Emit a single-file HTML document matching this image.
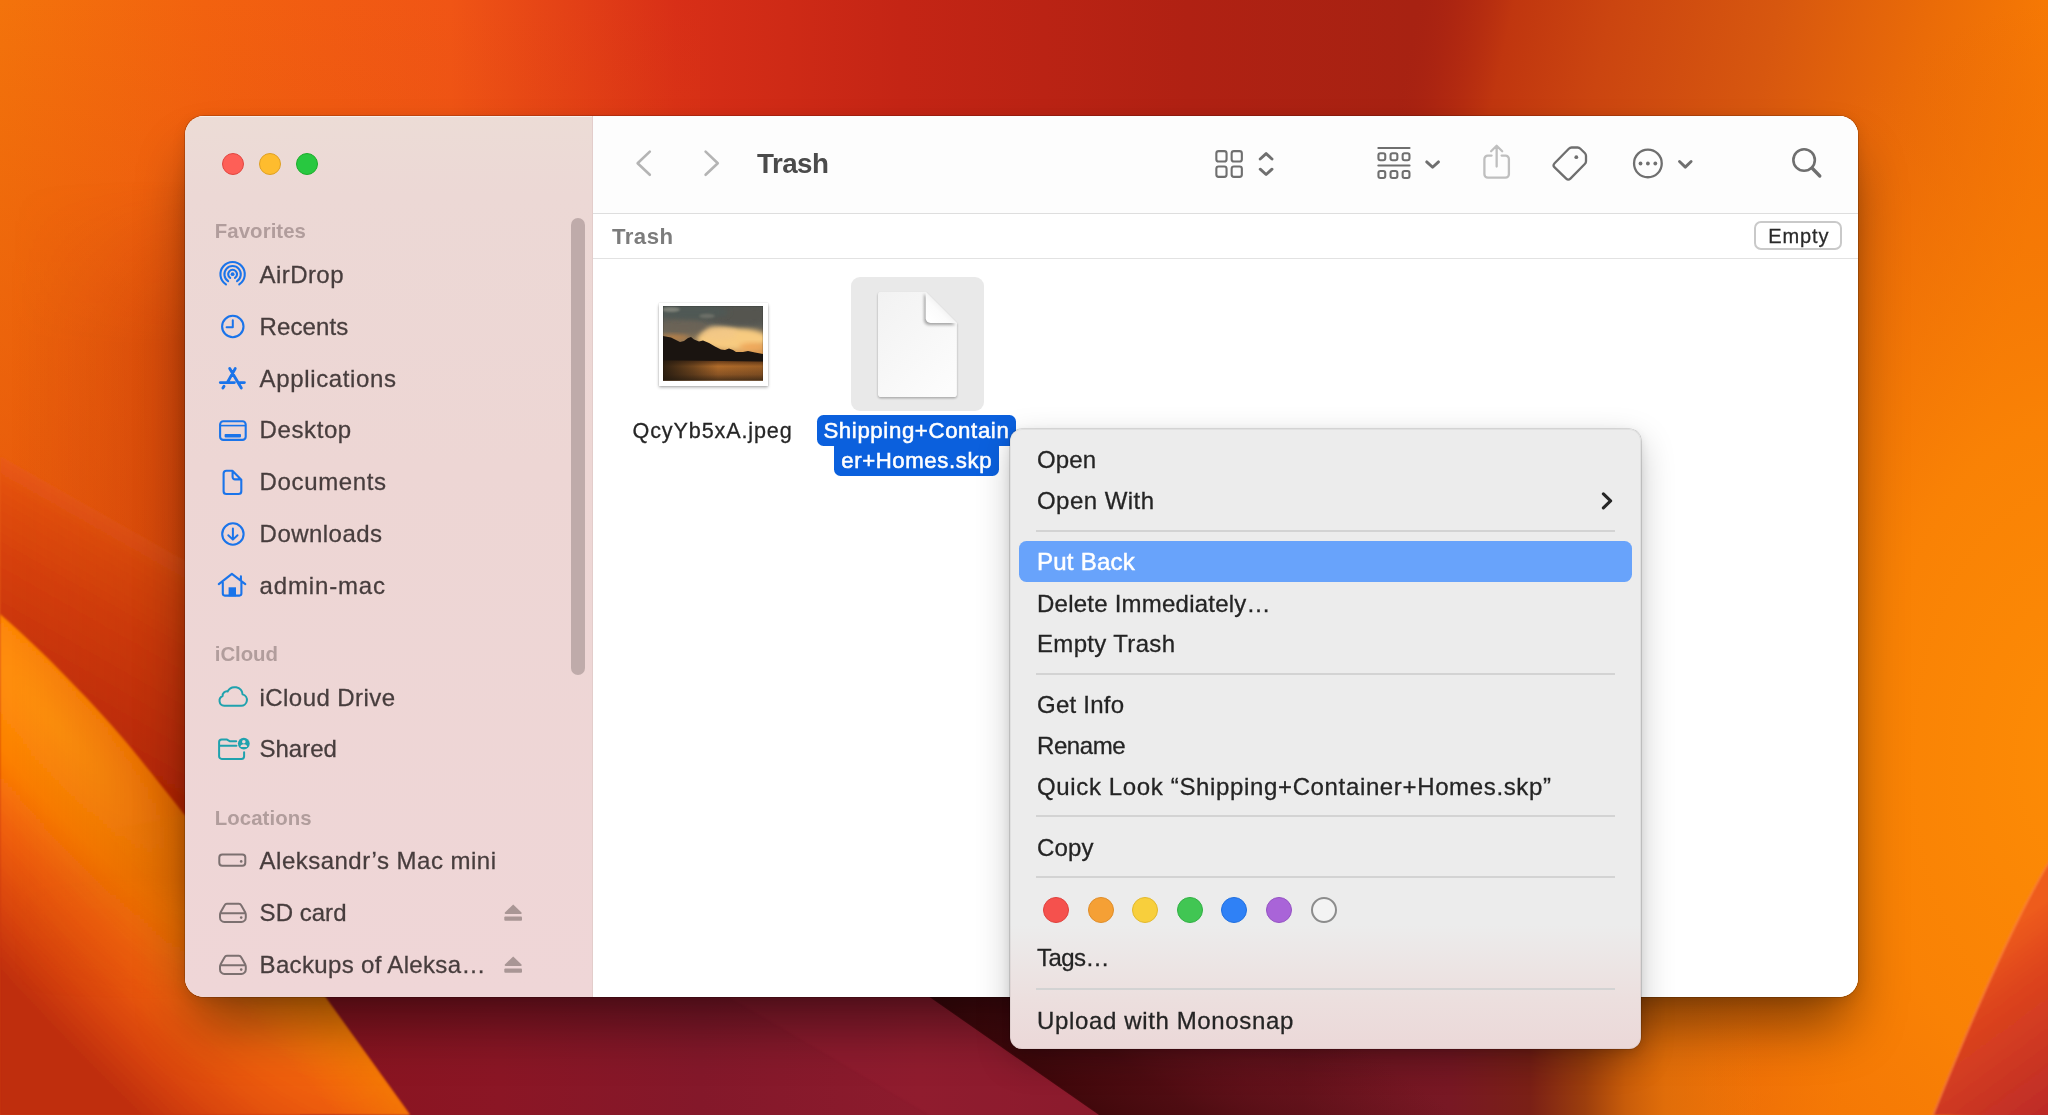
<!DOCTYPE html>
<html lang="en"><head><meta charset="utf-8"><title>Trash</title>
<style>
html,body{margin:0;padding:0;background:#b3200f;}
body{width:2048px;height:1115px;overflow:hidden;font-family:"Liberation Sans",sans-serif;}
#stage{position:relative;width:2048px;height:1115px;overflow:hidden;will-change:transform;}
.abs,.t,svg.ic{position:absolute;}
.t{white-space:nowrap;margin:0;padding:0;-webkit-text-stroke:.28px currentColor;}
#wall{position:absolute;left:0;top:0;width:2048px;height:1115px;display:block;}
#win{position:absolute;left:185px;top:116px;width:1673px;height:881px;border-radius:19px;
  box-shadow:0 0 0 1px rgba(0,0,0,.16),0 36px 56px -9px rgba(0,0,0,.46),0 4px 14px rgba(0,0,0,.10);}
#winclip{position:absolute;left:0;top:0;right:0;bottom:0;border-radius:19px;overflow:hidden;background:#fff;}
#side{position:absolute;left:0;top:0;width:407.7px;height:881px;
  background:linear-gradient(180deg,#ecdcd6 0%,#ecd8d5 9%,#edd6d4 40%,#efd6d7 100%);box-shadow:inset 0 1px 0 rgba(255,255,255,.55);border-right:1.4px solid #e3cdcb;box-sizing:border-box;}
#main{position:absolute;left:407.7px;top:0;right:0;bottom:0;background:#fff;}
#tb{position:absolute;left:0;top:0;right:0;height:96.8px;background:#fdfdfd;border-bottom:1.5px solid #dedede;}
#pb{position:absolute;left:0;top:98.3px;right:0;height:44px;background:#fff;border-bottom:1.5px solid #e2e2e2;}
.tl{position:absolute;width:22px;height:22px;border-radius:50%;top:37px;box-sizing:border-box;}
#menu{position:absolute;left:1010px;top:429px;width:631px;height:619.5px;border-radius:12px;
  background:linear-gradient(180deg,#ececec 0%,#ececec 80%,#ecdfde 92%,#ebd8d8 100%);
  box-shadow:0 0 0 .6px rgba(0,0,0,.22),inset 0 0 0 1px rgba(0,0,0,.05),0 12px 34px rgba(0,0,0,.22),0 3px 10px rgba(0,0,0,.10);}
.sep{position:absolute;left:26px;width:579px;height:2px;background:#d3d3d3;}
.dot{position:absolute;width:26px;height:26px;border-radius:50%;box-sizing:border-box;top:467.8px;}

</style></head>
<body>
<div id="stage">
<svg id="wall" width="2048" height="1115" viewBox="0 0 2048 1115">
<defs>
<linearGradient id="gTop" x1="0" y1="0" x2="2048" y2="0" gradientUnits="userSpaceOnUse">
<stop offset="0" stop-color="#f3730b"/><stop offset=".10" stop-color="#f2620f"/><stop offset=".22" stop-color="#f05515"/>
<stop offset=".33" stop-color="#d82f17"/><stop offset=".44" stop-color="#c42515"/><stop offset=".58" stop-color="#b02113"/>
<stop offset=".69" stop-color="#a72212"/><stop offset="1" stop-color="#a72212"/>
</linearGradient>
<linearGradient id="gTopR" x1="1415" y1="0" x2="2048" y2="135" gradientUnits="userSpaceOnUse">
<stop offset="0" stop-color="#a72212" stop-opacity="0"/><stop offset=".07" stop-color="#b32a10" stop-opacity=".6"/><stop offset=".15" stop-color="#c0360f"/><stop offset=".3" stop-color="#cb4510"/><stop offset=".55" stop-color="#d7570f"/>
<stop offset=".78" stop-color="#ea6b08"/><stop offset="1" stop-color="#f97c03"/>
</linearGradient>
<linearGradient id="gLeftDark" x1="0" y1="0" x2="0" y2="1115" gradientUnits="userSpaceOnUse">
<stop offset="0" stop-color="#e04a0c" stop-opacity="0"/><stop offset=".45" stop-color="#e04a0c" stop-opacity=".55"/><stop offset="1" stop-color="#d03a0c" stop-opacity=".8"/>
</linearGradient>
<linearGradient id="gA" x1="92" y1="508" x2="-16.7" y2="699" gradientUnits="userSpaceOnUse">
<stop offset="0" stop-color="#e95b17"/><stop offset=".1" stop-color="#e3510f"/><stop offset=".4" stop-color="#d6400b"/><stop offset="1" stop-color="#bd2a06"/>
</linearGradient>
<linearGradient id="gBand" x1="325" y1="997" x2="272" y2="1042" gradientUnits="userSpaceOnUse"><stop offset="0" stop-color="#f98808" stop-opacity=".7"/><stop offset="1" stop-color="#f98808" stop-opacity="0"/></linearGradient>
<linearGradient id="gLD" x1="10" y1="0" x2="190" y2="0" gradientUnits="userSpaceOnUse">
<stop offset="0" stop-color="#8c1400" stop-opacity="0"/><stop offset=".5" stop-color="#8c1400" stop-opacity=".1"/><stop offset="1" stop-color="#8c1400" stop-opacity=".26"/>
</linearGradient>
<linearGradient id="gLDm" x1="0" y1="180" x2="0" y2="1000" gradientUnits="userSpaceOnUse">
<stop offset="0" stop-color="#fff" stop-opacity="0"/><stop offset=".2" stop-color="#fff" stop-opacity="1"/><stop offset=".85" stop-color="#fff" stop-opacity="1"/><stop offset="1" stop-color="#fff" stop-opacity="0"/>
</linearGradient>
<mask id="mLD" maskUnits="userSpaceOnUse" x="0" y="0" width="200" height="1115"><rect x="0" y="0" width="200" height="1115" fill="url(#gLDm)"/></mask>
<radialGradient id="gB" cx="0" cy="0" r="1" gradientUnits="userSpaceOnUse" gradientTransform="translate(60 730) rotate(49.7) scale(900 205)">
<stop offset="0" stop-color="#ff9308"/><stop offset=".28" stop-color="#fc8006"/><stop offset=".52" stop-color="#ef5f08"/><stop offset=".78" stop-color="#d8440c"/><stop offset="1" stop-color="#bf2e10"/>
</radialGradient>
<linearGradient id="gM" x1="330" y1="0" x2="1760" y2="0" gradientUnits="userSpaceOnUse">
<stop offset="0.0000" stop-color="#8a1420" stop-opacity="1"/><stop offset="0.1189" stop-color="#8b1625" stop-opacity="1"/><stop offset="0.2587" stop-color="#84182a" stop-opacity="1"/><stop offset="0.4119" stop-color="#8c1b2d" stop-opacity="1"/><stop offset="0.5734" stop-color="#84192a" stop-opacity="1"/><stop offset="0.6783" stop-color="#701521" stop-opacity="1"/><stop offset="0.7832" stop-color="#781824" stop-opacity="1"/><stop offset="0.8392" stop-color="#7a2016" stop-opacity="1"/><stop offset="0.8776" stop-color="#9c3e0d" stop-opacity="1"/><stop offset="0.9056" stop-color="#c85c0a" stop-opacity="1"/><stop offset="0.9336" stop-color="#e06e09" stop-opacity="0.9"/><stop offset="1.0000" stop-color="#ee7c08" stop-opacity="0"/>
</linearGradient>
<linearGradient id="gFold" x1="1004" y1="1056" x2="1125" y2="882" gradientUnits="userSpaceOnUse"><stop offset="0" stop-color="#40080b"/><stop offset=".3" stop-color="#480b0f" stop-opacity=".88"/><stop offset="1" stop-color="#5a1016" stop-opacity="0"/></linearGradient>
<radialGradient id="gR" cx="2080" cy="760" r="760" gradientUnits="userSpaceOnUse" gradientTransform="translate(2080 760) scale(.62 1) translate(-2080 -760)">
<stop offset="0" stop-color="#fd8c05"/><stop offset=".45" stop-color="#f98205" stop-opacity=".95"/><stop offset=".8" stop-color="#f07207" stop-opacity=".5"/><stop offset="1" stop-color="#e8680a" stop-opacity="0"/>
</radialGradient>
<linearGradient id="gRT" x1="1962" y1="960" x2="2064" y2="1100" gradientUnits="userSpaceOnUse">
<stop offset="0" stop-color="#ee5c1a"/><stop offset=".3" stop-color="#de451d"/><stop offset="1" stop-color="#bd2b28"/>
</linearGradient>
<filter id="b3" x="-10%" y="-10%" width="120%" height="120%"><feGaussianBlur stdDeviation="1.2"/></filter>
<filter id="b30" x="-30%" y="-30%" width="160%" height="160%"><feGaussianBlur stdDeviation="40"/></filter>
</defs>
<rect width="2048" height="1115" fill="url(#gTop)"/>
<rect x="1300" width="748" height="1115" fill="url(#gTopR)"/>
<rect x="0" y="0" width="700" height="1115" fill="url(#gLeftDark)"/>
<rect x="1400" y="0" width="648" height="1115" fill="url(#gR)"/>
<!-- dark red layer under edge 1 -->
<path d="M0 456 L185 561 L600 800 L600 1115 L0 1115Z" fill="url(#gA)" filter="url(#b3)"/>
<!-- maroon bottom -->
<rect x="300" y="900" width="1460" height="215" fill="url(#gM)"/>
<path d="M905 980 L1099 1115 L1650 1115 L1650 980Z" fill="url(#gFold)"/>
<path d="M905 980 L1099 1115 L930 1115 L700 980Z" fill="#a02036" opacity=".22" filter="url(#b3)"/>
<!-- bright orange shape -->
<path d="M0 614 C40 648 100 710 132 749 C175 802 260 910 325 997 L410 1115 L0 1115Z" fill="url(#gB)" filter="url(#b3)"/>
<path d="M185 815 C230 872 280 938 325 997 L410 1115 L320 1115 L240 1000 C200 945 150 880 105 830Z" fill="url(#gBand)" filter="url(#b3)"/>
<rect x="0" y="150" width="190" height="880" fill="url(#gLD)" mask="url(#mLD)"/>
<!-- right bottom -->
<path d="M2052 857 Q2007 930 1933 1115 L2052 1119Z" fill="url(#gRT)" filter="url(#b3)"/>
<path d="M2052 857 Q2007 930 1933 1115" fill="none" stroke="#ff8d50" stroke-opacity=".55" stroke-width="2.2" filter="url(#b3)"/>
</svg>
<div id="win"><div id="winclip">
<div id="side"></div><div id="main"><div id="tb"></div><div id="pb"></div></div>
</div></div>
<div class="tl" style="left:221.8px;top:153.1px;width:22px;height:22px;background:#fe5f57;border:1px solid #e14640;"></div>
<div class="tl" style="left:259.0px;top:153.1px;width:22px;height:22px;background:#febc2e;border:1px solid #dfa023;"></div>
<div class="tl" style="left:296.0px;top:153.1px;width:22px;height:22px;background:#28c840;border:1px solid #1dad2b;"></div>
<div class="abs" style="left:571px;top:218px;width:14px;height:457px;border-radius:7px;background:#bfabaa;"></div>
<div class="t " style="left:214.8px;top:218.23px;font-size:20.4px;line-height:27px;color:#b19d9c;font-weight:700;-webkit-text-stroke:0;letter-spacing:0.062px;">Favorites</div>
<div class="t " style="left:214.8px;top:640.83px;font-size:20.4px;line-height:27px;color:#b19d9c;font-weight:700;-webkit-text-stroke:0;letter-spacing:-0.050px;">iCloud</div>
<div class="t " style="left:214.8px;top:804.63px;font-size:20.4px;line-height:27px;color:#b19d9c;font-weight:700;-webkit-text-stroke:0;letter-spacing:0.057px;">Locations</div>
<div class="t " style="left:259.6px;top:258.98px;font-size:24px;line-height:31px;color:#473d3d;letter-spacing:0.424px;">AirDrop</div>
<div class="t " style="left:259.6px;top:310.78px;font-size:24px;line-height:31px;color:#473d3d;letter-spacing:0.093px;">Recents</div>
<div class="t " style="left:259.6px;top:362.58px;font-size:24px;line-height:31px;color:#473d3d;letter-spacing:0.635px;">Applications</div>
<div class="t " style="left:259.6px;top:414.38px;font-size:24px;line-height:31px;color:#473d3d;letter-spacing:0.593px;">Desktop</div>
<div class="t " style="left:259.6px;top:466.18px;font-size:24px;line-height:31px;color:#473d3d;letter-spacing:0.627px;">Documents</div>
<div class="t " style="left:259.6px;top:517.98px;font-size:24px;line-height:31px;color:#473d3d;letter-spacing:0.458px;">Downloads</div>
<div class="t " style="left:259.6px;top:569.78px;font-size:24px;line-height:31px;color:#473d3d;letter-spacing:0.837px;">admin-mac</div>
<div class="t " style="left:259.6px;top:681.78px;font-size:24px;line-height:31px;color:#473d3d;letter-spacing:0.426px;">iCloud Drive</div>
<div class="t " style="left:259.6px;top:733.38px;font-size:24px;line-height:31px;color:#473d3d;letter-spacing:-0.039px;">Shared</div>
<div class="t " style="left:259.6px;top:844.88px;font-size:24px;line-height:31px;color:#473d3d;letter-spacing:0.484px;">Aleksandr’s Mac mini</div>
<div class="t " style="left:259.6px;top:897.18px;font-size:24px;line-height:31px;color:#473d3d;letter-spacing:0.034px;">SD card</div>
<div class="t " style="left:259.6px;top:948.88px;font-size:24px;line-height:31px;color:#473d3d;letter-spacing:0.334px;">Backups of Aleksa…</div>
<div class="t " style="left:757.0px;top:145.98px;font-size:27.75px;line-height:36px;color:#4b4b4b;font-weight:700;-webkit-text-stroke:0;letter-spacing:-0.510px;">Trash</div>
<div class="t " style="left:612.0px;top:221.91px;font-size:22.2px;line-height:29px;color:#7c7c7c;font-weight:700;-webkit-text-stroke:0;letter-spacing:0.442px;">Trash</div>
<div class="abs" style="left:1754.4px;top:221.3px;width:88px;height:28.7px;box-sizing:border-box;border:2px solid #c9c9c9;border-radius:7px;background:#fff;"></div>
<div class="t " style="left:1768.2px;top:223.27px;font-size:20px;line-height:26px;color:#2a2a2a;letter-spacing:0.880px;">Empty</div>
<div class="abs" style="left:658.8px;top:302.6px;width:109.4px;height:83px;background:#fff;box-shadow:0 1.5px 3px rgba(0,0,0,.30),0 0 1.5px rgba(0,0,0,.18);"></div>
<svg class="ic" style="left:663.2px;top:306px" width="100" height="74.8" viewBox="0 0 100 74.8">
<defs><linearGradient id="sky" x1="0" y1="0" x2="0" y2="1"><stop offset="0" stop-color="#4c5350"/><stop offset=".25" stop-color="#5d5e57"/><stop offset=".45" stop-color="#8a7558"/><stop offset=".62" stop-color="#d99a52"/><stop offset=".75" stop-color="#e09548"/></linearGradient>
<linearGradient id="wat" x1="0" y1="0" x2="0" y2="1"><stop offset="0" stop-color="#5a3316"/><stop offset=".3" stop-color="#b06b2a"/><stop offset=".7" stop-color="#8a5424"/><stop offset="1" stop-color="#4a3018"/></linearGradient>
<linearGradient id="watx" x1="0" y1="0" x2="1" y2="0"><stop offset="0" stop-color="#20180f" stop-opacity=".9"/><stop offset=".3" stop-color="#20180f" stop-opacity=".45"/><stop offset=".55" stop-color="#20180f" stop-opacity="0"/><stop offset="1" stop-color="#20180f" stop-opacity=".15"/></linearGradient>
<filter id="tb1" x="-30%" y="-30%" width="160%" height="160%"><feGaussianBlur stdDeviation="2.6"/></filter>
<filter id="tb2" x="-30%" y="-30%" width="160%" height="160%"><feGaussianBlur stdDeviation="1.2"/></filter>
<clipPath id="tcl"><rect width="100" height="74.8"/></clipPath></defs>
<g clip-path="url(#tcl)">
<rect width="100" height="74.8" fill="url(#sky)"/>
<ellipse cx="70" cy="33" rx="36" ry="11" fill="#f7cb80" filter="url(#tb1)"/>
<ellipse cx="56" cy="27" rx="18" ry="7" fill="#f3c887" opacity=".85" filter="url(#tb1)"/>
<ellipse cx="90" cy="41" rx="14" ry="4" fill="#f0a85a" filter="url(#tb1)"/>
<ellipse cx="12" cy="31" rx="14" ry="3" fill="#c98645" opacity=".8" filter="url(#tb1)"/>
<ellipse cx="20" cy="20" rx="24" ry="7" fill="#6c6357" opacity=".9" filter="url(#tb1)"/>
<ellipse cx="78" cy="9" rx="36" ry="10" fill="#54554f" filter="url(#tb1)"/>
<ellipse cx="30" cy="6" rx="36" ry="7" fill="#505855" filter="url(#tb1)"/>
<ellipse cx="8" cy="3.5" rx="9" ry="2.6" fill="#8a8c82" opacity=".8" filter="url(#tb2)"/>
<ellipse cx="44" cy="10" rx="8" ry="2.2" fill="#7f7f74" opacity=".6" filter="url(#tb2)"/>
<rect y="54" width="100" height="20.8" fill="url(#wat)"/>
<rect y="54" width="100" height="20.8" fill="url(#watx)"/>
<path d="M0 30 L8 31.5 L17 36 L21 35 L25 32 L28 31 L31 33.5 L36 35.5 L40 34.5 L46 37 L52 40.5 L58 43.5 L62 44 L66 42.5 L70 44 L73 46 L80 46 L85 45 L92 46.5 L100 48 L100 55.6 L0 54.2Z" fill="#1a1410"/>
<rect width="100" height="74.8" fill="none" stroke="#000" stroke-opacity=".25" stroke-width="1"/>
</g></svg>
<div class="t " style="left:632.5px;top:417.02px;font-size:21.6px;line-height:28px;color:#262626;letter-spacing:0.868px;">QcyYb5xA.jpeg</div>
<div class="abs" style="left:850.7px;top:277.4px;width:133.5px;height:133.2px;border-radius:9px;background:#e9e9e9;"></div>
<svg class="ic" style="left:867px;top:284px" width="100" height="124" viewBox="0 0 100 124">
<defs><linearGradient id="pg" x1="0" y1="0" x2=".8" y2="1"><stop offset="0" stop-color="#f2f2f2"/><stop offset="1" stop-color="#fcfcfc"/></linearGradient>
<linearGradient id="fold" x1=".1" y1=".9" x2=".75" y2=".25"><stop offset="0" stop-color="#ffffff"/><stop offset=".45" stop-color="#fbfbfb"/><stop offset="1" stop-color="#e4e4e4"/></linearGradient>
<filter id="ds" x="-20%" y="-20%" width="140%" height="140%"><feGaussianBlur stdDeviation="1.2"/></filter>
<filter id="ds2" x="-30%" y="-30%" width="160%" height="160%"><feGaussianBlur stdDeviation="1.7"/></filter>
<clipPath id="pgc"><path d="M13.8 7.8 H58.7 L89.9 39 V110.3 a2.8 2.8 0 0 1 -2.8 2.8 H13.8 a2.8 2.8 0 0 1 -2.8 -2.8 V10.6 a2.8 2.8 0 0 1 2.8 -2.8Z"/></clipPath></defs>
<path d="M13.8 7.8 H58.7 L89.9 39 V110.3 a2.8 2.8 0 0 1 -2.8 2.8 H13.8 a2.8 2.8 0 0 1 -2.8 -2.8 V10.6 a2.8 2.8 0 0 1 2.8 -2.8Z" fill="#000" opacity=".30" filter="url(#ds)" transform="translate(0,1.2)"/>
<path d="M13.8 7.8 H58.7 L89.9 39 V110.3 a2.8 2.8 0 0 1 -2.8 2.8 H13.8 a2.8 2.8 0 0 1 -2.8 -2.8 V10.6 a2.8 2.8 0 0 1 2.8 -2.8Z" fill="url(#pg)"/>
<g clip-path="url(#pgc)"><path d="M58.7 7.8 L89.9 39 H63.5 a4.8 4.8 0 0 1 -4.8 -4.8Z" fill="#000" opacity=".34" filter="url(#ds2)" transform="translate(-1.6,2)"/></g>
<path d="M58.7 7.8 L89.9 39 H63.5 a4.8 4.8 0 0 1 -4.8 -4.8Z" fill="url(#fold)"/>
</svg>
<div class="abs" style="left:817px;top:414.7px;width:198.7px;height:31px;border-radius:6.5px;background:#0b60dd;"></div>
<div class="abs" style="left:833.8px;top:440px;width:165.5px;height:35.8px;border-radius:6.5px;background:#0b60dd;"></div>
<div class="t " style="left:823.4px;top:415.91px;font-size:22.2px;line-height:29px;color:#ffffff;letter-spacing:0.640px;-webkit-text-stroke:.55px #fff;">Shipping+Contain</div>
<div class="t " style="left:841.2px;top:445.51px;font-size:22.2px;line-height:29px;color:#ffffff;letter-spacing:0.605px;-webkit-text-stroke:.55px #fff;">er+Homes.skp</div>
<svg class="ic" style="left:214px;top:256px" width="38" height="36" viewBox="214 256 38 36"><path d="M225.96 284.43 A12.2 12.2 0 1 1 239.24 284.43 M228.13 281.08 A8.2 8.2 0 1 1 237.07 281.08 M230.20 277.89 A4.4 4.4 0 1 1 235.00 277.89 " fill="none" stroke="#1a74ea" stroke-width="2.1" stroke-linecap="round"/><circle cx="232.6" cy="274.2" r="1.9" fill="#1a74ea"/></svg>
<svg class="ic" style="left:214px;top:308px" width="38" height="36" viewBox="214 308 38 36"><circle cx="232.8" cy="326.5" r="10.7" fill="none" stroke="#1a74ea" stroke-width="2.1"/><path d="M232.8 320.2 V327.3 H226.6" fill="none" stroke="#1a74ea" stroke-width="2" stroke-linecap="round" stroke-linejoin="round"/></svg>
<svg class="ic" style="left:214px;top:360px" width="38" height="36" viewBox="214 360 38 36"><path d="M235.2 368.6 L227.5 382.2 M224.0 386.3 L222.9 388.1 M229.7 368.6 L241.3 388.1 M220.3 382.6 H234.4 M239.4 382.6 H244.4" fill="none" stroke="#1a74ea" stroke-width="2.9" stroke-linecap="round"/></svg>
<svg class="ic" style="left:214px;top:414px" width="38" height="36" viewBox="214 414 38 36"><rect x="220.1" y="421.3" width="25.6" height="18.6" rx="3.2" fill="none" stroke="#1a74ea" stroke-width="2.1"/><path d="M220.5 425.6 H245.3" stroke="#1a74ea" stroke-width="1.6"/><rect x="224.6" y="434.0" width="16.4" height="3.4" rx=".8" fill="#1a74ea"/></svg>
<svg class="ic" style="left:214px;top:464px" width="38" height="36" viewBox="214 464 38 36"><path d="M226.4 470.8 H232.4 L241.3 479.7 V491.2 a2.8 2.8 0 0 1 -2.8 2.8 H226.4 a2.8 2.8 0 0 1 -2.8 -2.8 V473.6 a2.8 2.8 0 0 1 2.8 -2.8Z M232.6 471.2 V477 a2.4 2.4 0 0 0 2.4 2.4 H241" fill="none" stroke="#1a74ea" stroke-width="2.1" stroke-linejoin="round"/></svg>
<svg class="ic" style="left:214px;top:516px" width="38" height="36" viewBox="214 516 38 36"><circle cx="232.9" cy="534" r="10.7" fill="none" stroke="#1a74ea" stroke-width="2.1"/><path d="M232.9 528.6 V539.2 M228.3 535.2 L232.9 539.6 L237.5 535.2" fill="none" stroke="#1a74ea" stroke-width="2" stroke-linecap="round" stroke-linejoin="round"/></svg>
<svg class="ic" style="left:212px;top:566px" width="40" height="36" viewBox="212 566 40 36"><path d="M218.8 584.2 L231.9 573.9 L245.3 584.2 M222.8 582.6 V593.6 a2 2 0 0 0 2 2 H239.4 a2 2 0 0 0 2 -2 V582.6 M240.9 576.2 V580.6" fill="none" stroke="#1a74ea" stroke-width="2.1" stroke-linecap="round" stroke-linejoin="round"/><rect x="228.6" y="587.3" width="7.4" height="9" fill="#1a74ea"/></svg>
<svg class="ic" style="left:212px;top:680px" width="42" height="34" viewBox="212 680 42 34"><path d="M224.2 705.8 H240.8 A5.8 5.8 0 0 0 242.6 694.4 A8 8 0 0 0 227.6 691.4 A4.4 4.4 0 0 0 222.6 696.2 A5 5 0 0 0 224.2 705.8 Z" fill="none" stroke="#1fa2ae" stroke-width="2" stroke-linejoin="round"/></svg>
<svg class="ic" style="left:212px;top:732px" width="42" height="34" viewBox="212 732 42 34"><path d="M236.2 741.2 H229.6 L226.6 739.4 H221.7 a2.6 2.6 0 0 0 -2.6 2.6 V756.3 a2.6 2.6 0 0 0 2.6 2.6 H241.5 a2.6 2.6 0 0 0 2.6 -2.6 V752.2 M219.1 745.7 H236.4" fill="none" stroke="#1fa2ae" stroke-width="2" stroke-linejoin="round" stroke-linecap="round"/><circle cx="243.8" cy="743.6" r="5.9" fill="#1fa2ae"/><circle cx="243.8" cy="741.8" r="1.8" fill="#efd8d6"/><path d="M240.5 746.9 a3.3 2.7 0 0 1 6.6 0Z" fill="#efd8d6"/></svg>
<svg class="ic" style="left:212px;top:846px" width="42" height="30" viewBox="212 846 42 30"><rect x="219.3" y="854.5" width="26" height="11.2" rx="3" fill="none" stroke="#7c7070" stroke-width="2"/><circle cx="241.2" cy="861.4" r="1.3" fill="#7c7070"/></svg>
<svg class="ic" style="left:212px;top:898px" width="42" height="30" viewBox="212 898 42 30"><path d="M226.9 903.8 H238.9 a2.6 2.6 0 0 1 2.3 1.4 L245.3 912.6 Q245.8 913.6 245.8 914.8 V917.5 a4.4 4.4 0 0 1 -4.4 4.4 H224.4 a4.4 4.4 0 0 1 -4.4 -4.4 V914.8 Q220 913.6 220.5 912.6 L224.6 905.2 a2.6 2.6 0 0 1 2.3 -1.4 Z M220.8 913.2 H245" fill="none" stroke="#7c7070" stroke-width="2" stroke-linejoin="round"/><circle cx="241.2" cy="917.6" r="1.3" fill="#7c7070"/></svg>
<svg class="ic" style="left:500px;top:900px" width="28" height="26" viewBox="500 900 28 26"><path d="M513.2 904.4 L521.5 912.6 a.8 .8 0 0 1 -.6 1.3 H505.5 a.8 .8 0 0 1 -.6 -1.3Z" fill="#a99695"/><rect x="504.3" y="916.5" width="17.7" height="4.3" rx="1" fill="#a99695"/></svg>
<svg class="ic" style="left:212px;top:950px" width="42" height="30" viewBox="212 950 42 30"><path d="M226.9 955.8 H238.9 a2.6 2.6 0 0 1 2.3 1.4 L245.3 964.6 Q245.8 965.6 245.8 966.8 V969.5 a4.4 4.4 0 0 1 -4.4 4.4 H224.4 a4.4 4.4 0 0 1 -4.4 -4.4 V966.8 Q220 965.6 220.5 964.6 L224.6 957.2 a2.6 2.6 0 0 1 2.3 -1.4 Z M220.8 965.2 H245" fill="none" stroke="#7c7070" stroke-width="2" stroke-linejoin="round"/><circle cx="241.2" cy="969.6" r="1.3" fill="#7c7070"/></svg>
<svg class="ic" style="left:500px;top:952px" width="28" height="26" viewBox="500 952 28 26"><path d="M513.2 956.4 L521.5 964.6 a.8 .8 0 0 1 -.6 1.3 H505.5 a.8 .8 0 0 1 -.6 -1.3Z" fill="#a99695"/><rect x="504.3" y="968.5" width="17.7" height="4.3" rx="1" fill="#a99695"/></svg>
<svg class="ic" style="left:626px;top:140px" width="110" height="48" viewBox="626 140 110 48"><path d="M649.8 151.6 L637.6 163.2 L649.8 174.8" fill="none" stroke="#b4b4b4" stroke-width="2.6" stroke-linecap="round" stroke-linejoin="round"/><path d="M705.6 151.6 L717.8 163.2 L705.6 174.8" fill="none" stroke="#b4b4b4" stroke-width="2.6" stroke-linecap="round" stroke-linejoin="round"/></svg>
<svg class="ic" style="left:1206px;top:140px" width="76" height="48" viewBox="1206 140 76 48"><rect x="1216.35" y="151.15" width="10.2" height="10.3" rx="2.3" fill="none" stroke="#6f6f6f" stroke-width="2.1"/><rect x="1216.35" y="166.55" width="10.2" height="10.3" rx="2.3" fill="none" stroke="#6f6f6f" stroke-width="2.1"/><rect x="1231.65" y="151.15" width="10.2" height="10.3" rx="2.3" fill="none" stroke="#6f6f6f" stroke-width="2.1"/><rect x="1231.65" y="166.55" width="10.2" height="10.3" rx="2.3" fill="none" stroke="#6f6f6f" stroke-width="2.1"/><path d="M1260.2 159 L1266.1 153.6 L1272 159 M1260.2 169.2 L1266.1 174.5 L1272 169.2" fill="none" stroke="#6f6f6f" stroke-width="2.9" stroke-linecap="round" stroke-linejoin="round"/></svg>
<svg class="ic" style="left:1370px;top:140px" width="80" height="48" viewBox="1370 140 80 48"><path d="M1378.4 148 H1409.5 M1378.4 165.5 H1409.5" stroke="#6f6f6f" stroke-width="2.2" stroke-linecap="round"/><rect x="1378.45" y="153.25" width="6.8" height="7" rx="2" fill="none" stroke="#6f6f6f" stroke-width="2.1"/><rect x="1378.45" y="170.95" width="6.8" height="7" rx="2" fill="none" stroke="#6f6f6f" stroke-width="2.1"/><rect x="1390.55" y="153.25" width="6.8" height="7" rx="2" fill="none" stroke="#6f6f6f" stroke-width="2.1"/><rect x="1390.55" y="170.95" width="6.8" height="7" rx="2" fill="none" stroke="#6f6f6f" stroke-width="2.1"/><rect x="1402.65" y="153.25" width="6.8" height="7" rx="2" fill="none" stroke="#6f6f6f" stroke-width="2.1"/><rect x="1402.65" y="170.95" width="6.8" height="7" rx="2" fill="none" stroke="#6f6f6f" stroke-width="2.1"/><path d="M1426.7 161.9 L1432.6 167.3 L1438.5 161.9" fill="none" stroke="#6f6f6f" stroke-width="2.9" stroke-linecap="round" stroke-linejoin="round"/></svg>
<svg class="ic" style="left:1476px;top:138px" width="44" height="48" viewBox="1476 138 44 48"><path d="M1491.6 155.6 H1487.8 a3.4 3.4 0 0 0 -3.4 3.4 V174.3 a3.4 3.4 0 0 0 3.4 3.4 H1505.5 a3.4 3.4 0 0 0 3.4 -3.4 V159 a3.4 3.4 0 0 0 -3.4 -3.4 H1501.6 M1496.65 166.6 V146.2 M1491.1 151.2 L1496.65 145.7 L1502.2 151.2" fill="none" stroke="#bfbfbf" stroke-width="2.3" stroke-linecap="round" stroke-linejoin="round"/></svg>
<svg class="ic" style="left:1544px;top:138px" width="52" height="50" viewBox="1544 138 52 50"><path d="M1571.6 147.5 H1577.6 Q1579.2 147.5 1580.4 148.7 L1584.8 153 Q1586 154.2 1586 155.8 V161.2 Q1586 162.8 1584.8 164 L1570.4 178.6 Q1568.3 180.7 1566.2 178.6 L1554.6 167.4 Q1552.5 165.3 1554.6 163.2 L1568.8 148.7 Q1570 147.5 1571.6 147.5 Z" fill="none" stroke="#6f6f6f" stroke-width="2.3" stroke-linejoin="round"/><circle cx="1576.3" cy="157.2" r="1.9" fill="#6f6f6f"/></svg>
<svg class="ic" style="left:1626px;top:140px" width="74" height="48" viewBox="1626 140 74 48"><circle cx="1647.9" cy="163.4" r="13.85" fill="none" stroke="#6f6f6f" stroke-width="2.3"/><circle cx="1640.5" cy="163.5" r="1.9" fill="#6f6f6f"/><circle cx="1647.9" cy="163.5" r="1.9" fill="#6f6f6f"/><circle cx="1655.3" cy="163.5" r="1.9" fill="#6f6f6f"/><path d="M1679.5 161.5 L1685.3 167.1 L1691.1 161.5" fill="none" stroke="#6f6f6f" stroke-width="2.9" stroke-linecap="round" stroke-linejoin="round"/></svg>
<svg class="ic" style="left:1784px;top:140px" width="46" height="46" viewBox="1784 140 46 46"><circle cx="1804.1" cy="160" r="10.75" fill="none" stroke="#6f6f6f" stroke-width="2.6"/><path d="M1812 168 L1819.8 176" stroke="#6f6f6f" stroke-width="3.3" stroke-linecap="round"/></svg>
<div id="menu">
<div class="sep" style="top:100.5px"></div>
<div class="sep" style="top:243.6px"></div>
<div class="sep" style="top:386.0px"></div>
<div class="sep" style="top:447.3px"></div>
<div class="sep" style="top:558.8px"></div>
<div class="abs" style="left:9.3px;top:111.9px;width:612.3px;height:40.8px;border-radius:7.5px;background:#68a3fb;"></div>
<div class="dot" style="left:33.4px;background:#f5514d;border:1.5px solid #e0413d;"></div>
<div class="dot" style="left:77.9px;background:#f5a035;border:1.5px solid #e08d28;"></div>
<div class="dot" style="left:122.3px;background:#f8cf3c;border:1.5px solid #e3b92b;"></div>
<div class="dot" style="left:166.8px;background:#41c653;border:1.5px solid #30b143;"></div>
<div class="dot" style="left:211.3px;background:#2f81f6;border:1.5px solid #1f6fe0;"></div>
<div class="dot" style="left:256.1px;background:#a964d8;border:1.5px solid #9552c4;"></div>
<div class="dot" style="left:300.6px;background:#f3f3f3;border:2px solid #8c8c8c;"></div>
<svg class="ic" style="left:585px;top:58px" width="24" height="28" viewBox="0 0 24 28"><path d="M8.4 6.9 L15.6 13.9 L8.4 20.9" fill="none" stroke="#262626" stroke-width="3.1" stroke-linecap="round" stroke-linejoin="round"/></svg>
</div>
<div class="t " style="left:1037.0px;top:444.48px;font-size:24px;line-height:31px;color:#242424;letter-spacing:0.096px;">Open</div>
<div class="t " style="left:1037.0px;top:484.98px;font-size:24px;line-height:31px;color:#242424;letter-spacing:0.453px;">Open With</div>
<div class="t " style="left:1037.0px;top:546.18px;font-size:24px;line-height:31px;color:#ffffff;letter-spacing:0.236px;-webkit-text-stroke:.5px #fff;">Put Back</div>
<div class="t " style="left:1037.0px;top:587.58px;font-size:24px;line-height:31px;color:#242424;letter-spacing:0.232px;">Delete Immediately…</div>
<div class="t " style="left:1037.0px;top:628.18px;font-size:24px;line-height:31px;color:#242424;letter-spacing:0.329px;">Empty Trash</div>
<div class="t " style="left:1037.0px;top:688.78px;font-size:24px;line-height:31px;color:#242424;letter-spacing:0.231px;">Get Info</div>
<div class="t " style="left:1037.0px;top:730.18px;font-size:24px;line-height:31px;color:#242424;letter-spacing:-0.404px;">Rename</div>
<div class="t " style="left:1037.0px;top:771.38px;font-size:24px;line-height:31px;color:#242424;letter-spacing:0.643px;">Quick Look “Shipping+Container+Homes.skp”</div>
<div class="t " style="left:1037.0px;top:832.48px;font-size:24px;line-height:31px;color:#242424;letter-spacing:0.157px;">Copy</div>
<div class="t " style="left:1037.0px;top:942.38px;font-size:24px;line-height:31px;color:#242424;letter-spacing:-0.524px;">Tags…</div>
<div class="t " style="left:1037.0px;top:1005.18px;font-size:24px;line-height:31px;color:#242424;letter-spacing:0.639px;">Upload with Monosnap</div>
</div>
</body></html>
